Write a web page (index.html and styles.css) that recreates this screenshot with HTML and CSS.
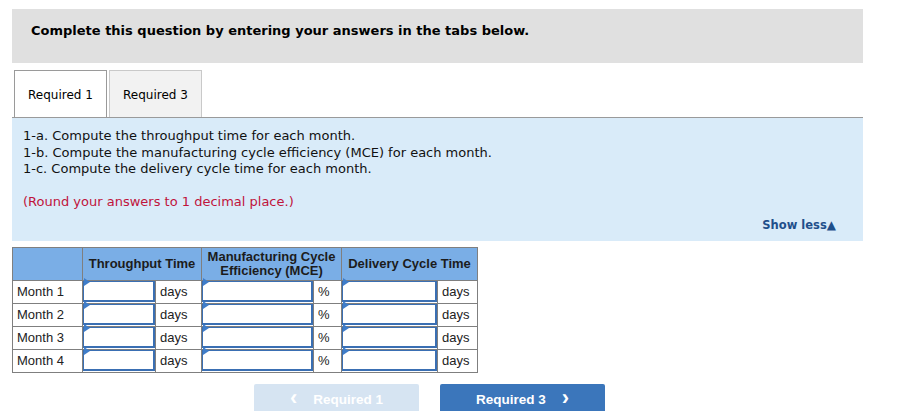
FILE: index.html
```html
<!DOCTYPE html>
<html>
<head>
<meta charset="utf-8">
<link rel="stylesheet" href="styles.css">
</head>
<body>
<div class="page">
  <div class="top">Complete this question by entering your answers in the tabs below.</div>
  <div class="tabs">
    <div class="tab active">Required 1</div>
    <div class="tab">Required 3</div>
  </div>
  <div class="panel">
    <div class="instr">
      <div>1-a. Compute the throughput time for each month.</div>
      <div>1-b. Compute the manufacturing cycle efficiency (MCE) for each month.</div>
      <div>1-c. Compute the delivery cycle time for each month.</div>
      <div class="round">(Round your answers to 1 decimal place.)</div>
    </div>
    <div class="showless">Show less<span class="tri">▲</span></div>
  </div>
  <table class="grid">
    <colgroup>
      <col class="c-label"><col class="c-in1"><col class="c-u1"><col class="c-in2"><col class="c-u2"><col class="c-in3"><col class="c-u3">
    </colgroup>
    <thead>
      <tr>
        <th></th>
        <th colspan="2">Throughput Time</th>
        <th colspan="2" class="two">Manufacturing Cycle<br>Efficiency (MCE)</th>
        <th colspan="2">Delivery Cycle Time</th>
      </tr>
    </thead>
    <tbody>
      <tr><td class="lbl">Month 1</td><td class="in"><div class="box"></div></td><td class="unit">days</td><td class="in"><div class="box"></div></td><td class="unit">%</td><td class="in"><div class="box"></div></td><td class="unit">days</td></tr>
      <tr><td class="lbl">Month 2</td><td class="in"><div class="box"></div></td><td class="unit">days</td><td class="in"><div class="box"></div></td><td class="unit">%</td><td class="in"><div class="box"></div></td><td class="unit">days</td></tr>
      <tr><td class="lbl">Month 3</td><td class="in"><div class="box"></div></td><td class="unit">days</td><td class="in"><div class="box"></div></td><td class="unit">%</td><td class="in"><div class="box"></div></td><td class="unit">days</td></tr>
      <tr><td class="lbl">Month 4</td><td class="in"><div class="box"></div></td><td class="unit">days</td><td class="in"><div class="box"></div></td><td class="unit">%</td><td class="in"><div class="box"></div></td><td class="unit">days</td></tr>
    </tbody>
  </table>
  <div class="nav">
    <div class="btn disabled"><span class="chev">&#8249;</span>Required 1</div>
    <div class="btn primary">Required 3<span class="chev right">&#8250;</span></div>
  </div>
</div>
</body>
</html>
```

FILE: styles.css
```css
html, body {
  margin: 0;
  padding: 0;
  background: #ffffff;
}
.page {
  padding: 9px 0 0 12px;
  width: 851px;
  font-family: "DejaVu Sans", Verdana, sans-serif;
  color: #000;
}
.top {
  height: 54px;
  background: #e0e0e0;
  padding: 14px 0 0 19px;
  font-weight: bold;
  font-size: 13px;
  line-height: 16px;
  box-sizing: border-box;
}
.tabs {
  margin-top: 7px;
  display: flex;
  gap: 2px;
  padding-left: 2px;
  border-bottom: 1px solid #9a9a9a;
  height: 47px;
}
.tab {
  width: 93px;
  height: 47px;
  box-sizing: border-box;
  display: flex;
  align-items: center;
  justify-content: center;
  font-size: 12px;
  background: #f2f2f2;
  border: 1px solid #c9c9c9;
  border-bottom: none;
  padding-top: 2px;
}
.tab.active {
  background: #ffffff;
  border-color: #9a9a9a;
}
.panel {
  background: #d9ebf9;
  height: 123px;
  box-sizing: border-box;
  padding: 10px 27px 0 11px;
  font-size: 13px;
  line-height: 16.5px;
  display: flex;
  flex-direction: column;
}
.instr {
  flex: 1;
  color: #111;
}
.round {
  color: #c0143c;
  margin-top: 16px;
}
.showless {
  align-self: flex-end;
  font-size: 11.5px;
  font-weight: bold;
  color: #1f4f8b;
  margin-bottom: 8px;
  line-height: 15px;
}
.tri {
  font-size: 12px;
  line-height: 10px;
  font-weight: normal;
}
.grid {
  margin-top: 6px;
  border-collapse: collapse;
  font-family: "Liberation Sans", Arial, sans-serif;
  font-size: 13px;
  table-layout: fixed;
  width: 465px;
}
.c-label { width: 70px; }
.c-in1 { width: 73px; }
.c-u1 { width: 46px; }
.c-in2 { width: 112px; }
.c-u2 { width: 28px; }
.c-in3 { width: 96px; }
.c-u3 { width: 40px; }
.grid thead tr { height: 33px; }
.grid tbody tr { height: 23px; }
.grid th {
  background: #7aaee6;
  border: 1px solid #7f7f7f;
  font-size: 13px;
  font-weight: bold;
  color: #1c1c1c;
  padding: 0 0 1px 0;
  line-height: 14px;
}
.grid td {
  border: 1px solid #7f7f7f;
  padding: 0 0 1px 0;
  color: #222;
  line-height: 15px;
}
.grid td.lbl {
  padding-left: 4px;
}
.grid td.unit {
  padding-left: 4px;
}
.box {
  height: 21px;
  box-sizing: border-box;
  border: 2px solid #3a6fb3;
  border-top-width: 1px;
  border-left-width: 1px;
  background: #fff;
  position: relative;
}
.box::before {
  content: "";
  position: absolute;
  left: 0;
  top: -4px;
  border-top: 4px solid transparent;
  border-bottom: 4px solid transparent;
  border-left: 6px solid #3f7dc9;
}
.nav {
  display: flex;
  gap: 21px;
  padding-left: 242px;
  margin-top: 11px;
}
.btn {
  width: 165px;
  height: 30px;
  display: flex;
  align-items: center;
  justify-content: center;
  font-family: "Liberation Sans", Arial, sans-serif;
  font-size: 13.5px;
  font-weight: bold;
  color: #fff;
  border-radius: 2px 2px 0 0;
}
.btn.disabled {
  background: #d6e4f2;
}
.btn.primary {
  background: #3b76bb;
}
.chev {
  font-size: 22px;
  margin-right: 16px;
  line-height: 14px;
  position: relative;
  top: -1px;
}
.chev.right {
  margin-right: 0;
  margin-left: 16px;
}
```
